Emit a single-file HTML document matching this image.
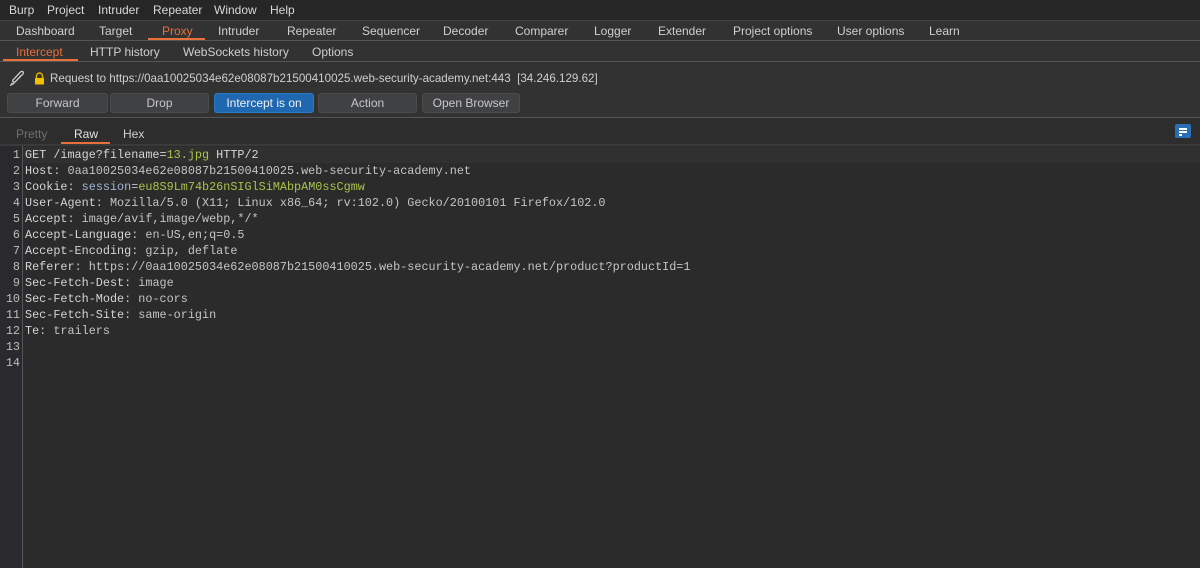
<!DOCTYPE html><html><head><style>
body{margin:0;width:1200px;height:568px;background:#2b2b2b;overflow:hidden;font-family:"Liberation Sans","DejaVu Sans",sans-serif;font-size:12px;color:#cfcfcf;position:relative}
.a{position:absolute;white-space:nowrap}
.bar{position:absolute;left:0;width:1200px}
.btn{position:absolute;top:93px;height:20px;background:#404143;border:1px solid #4c4c4c;border-radius:3px;text-align:center;line-height:19px;color:#c8c8c8;box-sizing:border-box}
.code{position:absolute;left:0;top:147px;font-family:"Liberation Mono","DejaVu Sans Mono",monospace;font-size:11.8px;line-height:16px}
.code div{height:16px;white-space:pre}
.n{display:inline-block;width:20px;text-align:right;color:#bdbdbd;margin-right:5px}
.k{color:#d4d4d4}.v{color:#c4c4c4}.g{color:#a6c34a}.b{color:#9fb6d6}
</style></head><body>
<div class="bar" style="top:0;height:20px;background:#262626"></div>
<div class="bar" style="top:20px;height:21px;background:#323232;border-top:1px solid #444;border-bottom:1px solid #555;box-sizing:border-box"></div>
<div class="bar" style="top:41px;height:21px;background:#323232;border-bottom:1px solid #555;box-sizing:border-box"></div>
<div class="bar" style="top:62px;height:56px;background:#323232;border-bottom:1px solid #555;box-sizing:border-box"></div>
<div class="bar" style="top:118px;height:28px;background:#2d2d2d;border-bottom:2px solid #3a3a3a;box-sizing:border-box"></div>
<div class="a" style="left:0;top:146px;width:22px;height:422px;background:#2a2a2e;border-right:1px solid #555"></div>
<div class="a" style="left:23px;top:147px;width:1177px;height:16px;background:#303030"></div>

<span class="a" style="left:9px;top:3px;color:#d8d8d8">Burp</span><span class="a" style="left:47px;top:3px;color:#d8d8d8">Project</span><span class="a" style="left:98px;top:3px;color:#d8d8d8">Intruder</span><span class="a" style="left:153px;top:3px;color:#d8d8d8">Repeater</span><span class="a" style="left:214px;top:3px;color:#d8d8d8">Window</span><span class="a" style="left:270px;top:3px;color:#d8d8d8">Help</span>

<span class="a" style="left:16px;top:24px">Dashboard</span><span class="a" style="left:99px;top:24px">Target</span><span class="a" style="left:162px;top:24px;color:#e8703a">Proxy</span><span class="a" style="left:218px;top:24px">Intruder</span><span class="a" style="left:287px;top:24px">Repeater</span><span class="a" style="left:362px;top:24px">Sequencer</span><span class="a" style="left:443px;top:24px">Decoder</span><span class="a" style="left:515px;top:24px">Comparer</span><span class="a" style="left:594px;top:24px">Logger</span><span class="a" style="left:658px;top:24px">Extender</span><span class="a" style="left:733px;top:24px">Project options</span><span class="a" style="left:837px;top:24px">User options</span><span class="a" style="left:929px;top:24px">Learn</span>
<div class="a" style="left:148px;top:38px;width:57px;height:2px;background:#e8703a"></div>

<span class="a" style="left:16px;top:45px;color:#e8703a">Intercept</span><span class="a" style="left:90px;top:45px">HTTP history</span><span class="a" style="left:183px;top:45px">WebSockets history</span><span class="a" style="left:312px;top:45px">Options</span>
<div class="a" style="left:3px;top:59px;width:75px;height:2px;background:#e8703a"></div>

<svg class="a" style="left:9px;top:70px" width="18" height="16" viewBox="0 0 18 16"><path d="M3 13 L2 15 L4 14 L14 4 Q15 2 13.5 1.5 Q12 1 11 2.5 L4 10 Q3 11.5 4.5 12 Q6 12.5 7 11 L12 5.5" fill="none" stroke="#ccc" stroke-width="1.3"/></svg>
<svg class="a" style="left:34px;top:72px" width="11" height="13" viewBox="0 0 11 13"><path d="M2.5 6V4a3 3 0 0 1 6 0v2" fill="none" stroke="#e0b000" stroke-width="1.4"/><rect x="1" y="6" width="9" height="6.5" fill="#f0c000"/></svg>
<span class="a" style="left:50px;top:72px;color:#cfcfcf;font-size:11.6px">Request to https://0aa10025034e62e08087b21500410025.web-security-academy.net:443&nbsp; [34.246.129.62]</span>

<div class="btn" style="left:7px;width:101px">Forward</div>
<div class="btn" style="left:110px;width:99px">Drop</div>
<div class="btn" style="left:214px;width:100px;background:#1f68b0;border-color:#2b78c4;color:#f0f0f0">Intercept is on</div>
<div class="btn" style="left:318px;width:99px">Action</div>
<div class="btn" style="left:422px;width:98px">Open Browser</div>

<span class="a" style="left:16px;top:127px;color:#6f6f6f">Pretty</span><span class="a" style="left:74px;top:127px;color:#e0e0e0">Raw</span><span class="a" style="left:123px;top:127px">Hex</span>
<div class="a" style="left:61px;top:142px;width:49px;height:2px;background:#e8703a"></div>
<div class="a" style="left:1175px;top:124px;width:16px;height:14px;background:#2a6fb5;border-radius:2px"><div class="a" style="left:4px;top:4px;width:8px;height:1.5px;background:#fff"></div><div class="a" style="left:4px;top:7px;width:8px;height:1.5px;background:#fff"></div><div class="a" style="left:4px;top:10px;width:3px;height:1.5px;background:#fff"></div></div>

<div class="code">
<div><span class="n">1</span><span class="k">GET /image?filename=</span><span class="g">13.jpg</span><span class="k"> HTTP/2</span></div>
<div><span class="n">2</span><span class="k">Host</span><span class="v">: 0aa10025034e62e08087b21500410025.web-security-academy.net</span></div>
<div><span class="n">3</span><span class="k">Cookie</span><span class="v">: </span><span class="b">session</span><span class="v">=</span><span class="g">eu8S9Lm74b26nSIGlSiMAbpAM0ssCgmw</span></div>
<div><span class="n">4</span><span class="k">User-Agent</span><span class="v">: Mozilla/5.0 (X11; Linux x86_64; rv:102.0) Gecko/20100101 Firefox/102.0</span></div>
<div><span class="n">5</span><span class="k">Accept</span><span class="v">: image/avif,image/webp,*/*</span></div>
<div><span class="n">6</span><span class="k">Accept-Language</span><span class="v">: en-US,en;q=0.5</span></div>
<div><span class="n">7</span><span class="k">Accept-Encoding</span><span class="v">: gzip, deflate</span></div>
<div><span class="n">8</span><span class="k">Referer</span><span class="v">: https://0aa10025034e62e08087b21500410025.web-security-academy.net/product?productId=1</span></div>
<div><span class="n">9</span><span class="k">Sec-Fetch-Dest</span><span class="v">: image</span></div>
<div><span class="n">10</span><span class="k">Sec-Fetch-Mode</span><span class="v">: no-cors</span></div>
<div><span class="n">11</span><span class="k">Sec-Fetch-Site</span><span class="v">: same-origin</span></div>
<div><span class="n">12</span><span class="k">Te</span><span class="v">: trailers</span></div>
<div><span class="n">13</span></div>
<div><span class="n">14</span></div>
</div>
</body></html>
